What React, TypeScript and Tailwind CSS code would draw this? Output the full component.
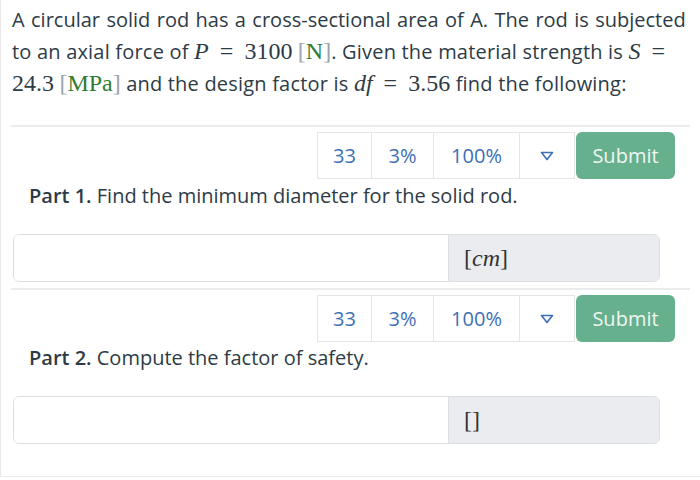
const sans = { fontFamily: "'Open Sans', Lato, sans-serif" };

function M({ children, i = false }: { children: React.ReactNode; i?: boolean }) {
  return (
    <span className={`font-['Liberation_Serif',serif] text-[24px] leading-none tracking-normal ${i ? "italic" : ""}`}>
      {children}
    </span>
  );
}

function Eq() {
  return <span className="mx-[11px] font-['Liberation_Serif',serif] text-[24px] leading-none">=</span>;
}

function Unit({ children }: { children: React.ReactNode }) {
  return (
    <span className="font-['Liberation_Serif',serif] text-[24px] leading-none tracking-normal text-[#2e7d32]">
      <span className="text-[#9aa5ad]">[</span>
      {children}
      <span className="text-[#9aa5ad]">]</span>
    </span>
  );
}

function Toolbar() {
  const cell = "flex h-full items-center justify-center border border-[#e3e6e8] text-[20px] text-[#3d6fb4]";
  return (
    <div className="flex h-[47px] justify-end pr-[25px]">
      <div className={`${cell} w-[55px]`}>33</div>
      <div className={`${cell} -ml-px w-[63px]`}>3%</div>
      <div className={`${cell} -ml-px w-[87px]`}>100%</div>
      <div className={`${cell} -ml-px w-[56px]`}>
        <svg width="14" height="10" viewBox="0 0 14 10">
          <path d="M1.5 1.5 H12.5 L7 8.5 Z" fill="none" stroke="#3d6fb4" strokeWidth="1.6" strokeLinejoin="round" />
        </svg>
      </div>
      <button className="ml-[1px] flex h-full w-[99px] items-center justify-center rounded-md bg-[#66b08d] text-[20px] text-[#eef7f2]">
        Submit
      </button>
    </div>
  );
}

function AnswerBox({ unit }: { unit: React.ReactNode }) {
  return (
    <div className="ml-[12px] mr-[40px] flex h-[48px] overflow-hidden rounded-md border border-[#dcdfe2]">
      <div className="w-[434px] bg-white" />
      <div className="flex flex-1 items-center border-l border-[#dcdfe2] bg-[#ebecef] pl-[15px]">{unit}</div>
    </div>
  );
}

export default function App() {
  return (
    <div className="h-[480px] w-[700px] overflow-hidden bg-white text-[#2d3b45]" style={sans}>
      <div className="h-[477px] border-b border-l border-[#e9e9e9] pt-[4px]">
        <div className="whitespace-nowrap pl-[11px] text-[20px] leading-[32px] tracking-[0.2px]">
          <div className="tracking-normal [word-spacing:1.2px]">
            A circular solid rod has a cross-sectional area of A. The rod is subjected
          </div>
          <div>
            to an axial force of <M i>P</M>
            <Eq />
            <M>3100</M> <Unit>N</Unit>. Given the material strength is <M i>S</M>
            <Eq />
          </div>
          <div>
            <M>24.3</M> <Unit>MPa</Unit> and the design factor is <M i>df</M>
            <Eq />
            <M>3.56</M> find the following:
          </div>
        </div>
        <div className="mx-[10px] mt-[25px] border-t-2 border-[#ececec]" />
        <div className="pt-[5px]">
          <Toolbar />
          <p className="pl-[28px] pt-[2px] text-[20px] leading-[30px]">
            <b className="font-semibold">Part 1.</b> Find the minimum diameter for the solid rod.
          </p>
          <div className="mt-[23px]">
            <AnswerBox
              unit={
                <span className="font-['Liberation_Serif',serif] text-[24px] text-[#333]">
                  [<i>cm</i>]
                </span>
              }
            />
          </div>
        </div>
        <div className="mx-[10px] mt-[6px] border-t-2 border-[#ececec]" />
        <div className="pt-[5px]">
          <Toolbar />
          <p className="pl-[28px] pt-[1px] text-[20px] leading-[30px]">
            <b className="font-semibold">Part 2.</b> Compute the factor of safety.
          </p>
          <div className="mt-[23px]">
            <AnswerBox unit={<span className="font-['Liberation_Serif',serif] text-[24px] text-[#333]">[]</span>} />
          </div>
        </div>
      </div>
    </div>
  );
}
